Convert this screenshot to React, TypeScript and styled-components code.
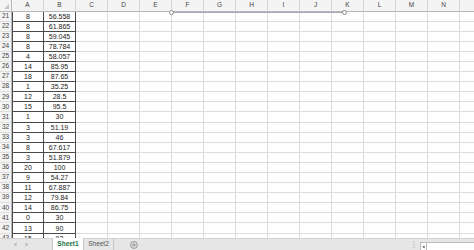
import React from "react";
import styled, { createGlobalStyle } from "styled-components";

const GlobalStyle = createGlobalStyle`
  html, body { margin: 0; padding: 0; background: #ffffff; overflow: hidden; }
  body { font-family: "Liberation Sans", Arial, sans-serif; }
  * { box-sizing: border-box; }
`;

const COLS = ["A", "B", "C", "D", "E", "F", "G", "H", "I", "J", "K", "L", "M", "N", ""];

const DATA: Array<[number, string, string]> = [
  [21, "8", "56.558"],
  [22, "8", "61.865"],
  [23, "8", "59.045"],
  [24, "8", "78.784"],
  [25, "4", "58.057"],
  [26, "14", "85.95"],
  [27, "18", "87.65"],
  [28, "1", "35.25"],
  [29, "12", "28.5"],
  [30, "15", "95.5"],
  [31, "1", "30"],
  [32, "3", "51.19"],
  [33, "3", "46"],
  [34, "8", "67.617"],
  [35, "3", "51.879"],
  [36, "20", "100"],
  [37, "9", "54.27"],
  [38, "11", "67.887"],
  [39, "12", "79.84"],
  [40, "14", "86.75"],
  [41, "0", "30"],
  [42, "13", "90"],
  [43, "15", "92"],
];

const Window = styled.div`
  width: 474px;
  height: 250px;
  display: flex;
  flex-direction: column;
  overflow: hidden;
  background: #ffffff;
`;

const SheetArea = styled.div`
  position: relative;
  flex: 1;
  overflow: hidden;
`;

const Grid = styled.div`
  display: grid;
  grid-template-columns: 12px repeat(15, 32px);
  grid-template-rows: 11.5px repeat(23, 10.1px);
  font-size: 7px;
  color: #222;
`;

const CornerCell = styled.div`
  background: #f4f4f4;
  border-right: 1px solid #b8b8b8;
  border-bottom: 1px solid #b8b8b8;
  display: flex;
  align-items: flex-end;
  justify-content: flex-end;
  padding: 0 2px 2px 0;
`;

const ColHeader = styled.div`
  background: #f4f4f4;
  border-right: 1px solid #d6d6d6;
  border-bottom: 1px solid #b8b8b8;
  color: #444;
  font-size: 6.5px;
  display: flex;
  align-items: center;
  justify-content: center;
  line-height: 1;
`;

const RowHeader = styled.div`
  background: #f4f4f4;
  border-right: 1px solid #b8b8b8;
  border-bottom: 1px solid #dedede;
  color: #444;
  font-size: 6.5px;
  display: flex;
  align-items: center;
  justify-content: center;
  line-height: 1;
`;

const Cell = styled.div<{ $boxed?: boolean; $first?: boolean }>`
  border-right: 1px solid ${(p) => (p.$boxed ? "#4a4a4a" : "#dcdcdc")};
  border-bottom: 1px solid ${(p) => (p.$boxed ? "#4a4a4a" : "#dcdcdc")};
  border-left: ${(p) => (p.$first ? "1px solid #4a4a4a" : "none")};
  display: flex;
  align-items: center;
  justify-content: center;
  line-height: 1;
  white-space: nowrap;
  overflow: hidden;
`;

const SelectionEdge = styled.div`
  position: absolute;
  left: 171px;
  top: 11.5px;
  width: 173px;
  height: 1.5px;
  background: #a2acb8;
`;

const Handle = styled.div<{ $x: number }>`
  position: absolute;
  left: ${(p) => p.$x - 2.5}px;
  top: 10px;
  width: 5px;
  height: 5px;
  border-radius: 50%;
  border: 1px solid #8a8a8a;
  background: #ffffff;
`;

const TabBar = styled.div`
  height: 12px;
  flex: none;
  display: flex;
  align-items: stretch;
  background: #e6e6e6;
  border-top: 1px solid #d2d2d2;
  font-size: 6.5px;
`;

const NavArrows = styled.div`
  width: 52px;
  display: flex;
  align-items: center;
  gap: 8px;
  padding-left: 13px;
`;

const SheetTab = styled.div<{ $active?: boolean }>`
  width: ${(p) => (p.$active ? 32 : 30)}px;
  margin-top: -1px;
  display: flex;
  align-items: center;
  justify-content: center;
  background: ${(p) => (p.$active ? "#ffffff" : "transparent")};
  color: ${(p) => (p.$active ? "#217346" : "#555")};
  font-weight: ${(p) => (p.$active ? 700 : 400)};
  border-right: 1px solid #c6c6c6;
  border-left: ${(p) => (p.$active ? "1px solid #c6c6c6" : "none")};
  line-height: 1;
`;

const AddSheet = styled.div`
  width: 40px;
  display: flex;
  align-items: center;
  justify-content: center;
`;

const Spacer = styled.div`
  flex: 1;
`;

const Dots = styled.div`
  width: 10px;
  display: flex;
  align-items: center;
  justify-content: center;
  margin-right: 1px;
`;

const HScroll = styled.div`
  width: 54px;
  display: flex;
  align-items: stretch;
  padding-top: 3px;
`;

const ScrollBtn = styled.div`
  width: 7px;
  background: #ffffff;
  border: 1px solid #bdbdbd;
  border-bottom: none;
  display: flex;
  align-items: center;
  justify-content: center;
`;

const ScrollTrack = styled.div`
  flex: 1;
  background: #ffffff;
  border-top: 1px solid #bdbdbd;
`;

const Tri = ({ dir, size = 4, color }: { dir: "l" | "r"; size?: number; color: string }) => (
  <svg width={size} height={size + 1} viewBox="0 0 4 5">
    {dir === "l" ? <path d="M3.5 0.5 L0.5 2.5 L3.5 4.5 Z" fill={color} /> : <path d="M0.5 0.5 L3.5 2.5 L0.5 4.5 Z" fill={color} />}
  </svg>
);

export default function App() {
  return (
    <>
      <GlobalStyle />
      <Window>
        <SheetArea>
          <Grid>
            <CornerCell>
              <svg width="5" height="5" viewBox="0 0 5 5">
                <path d="M5 0 L5 5 L0 5 Z" fill="#c4c4c4" />
              </svg>
            </CornerCell>
            {COLS.map((c, i) => (
              <ColHeader key={i}>{c}</ColHeader>
            ))}
            {DATA.map(([row, a, b]) => (
              <React.Fragment key={row}>
                <RowHeader>{row}</RowHeader>
                <Cell $boxed $first>{a}</Cell>
                <Cell $boxed>{b}</Cell>
                {COLS.slice(2).map((_, i) => (
                  <Cell key={i} />
                ))}
              </React.Fragment>
            ))}
          </Grid>
          <SelectionEdge />
          <Handle $x={171.5} />
          <Handle $x={344} />
        </SheetArea>
        <TabBar>
          <NavArrows>
            <Tri dir="l" color="#b8b8b8" />
            <Tri dir="r" color="#b8b8b8" />
          </NavArrows>
          <SheetTab $active>Sheet1</SheetTab>
          <SheetTab>Sheet2</SheetTab>
          <AddSheet>
            <svg width="8" height="8" viewBox="0 0 8 8">
              <circle cx="4" cy="4" r="3.4" fill="none" stroke="#7a7a7a" strokeWidth="0.8" />
              <path d="M4 2.2 V5.8 M2.2 4 H5.8" stroke="#7a7a7a" strokeWidth="0.8" />
            </svg>
          </AddSheet>
          <Spacer />
          <Dots>
            <svg width="2" height="7" viewBox="0 0 2 7">
              <circle cx="1" cy="1" r="0.6" fill="#9a9a9a" />
              <circle cx="1" cy="3.5" r="0.6" fill="#9a9a9a" />
              <circle cx="1" cy="6" r="0.6" fill="#9a9a9a" />
            </svg>
          </Dots>
          <HScroll>
            <ScrollBtn>
              <Tri dir="l" size={3} color="#555" />
            </ScrollBtn>
            <ScrollTrack />
          </HScroll>
        </TabBar>
      </Window>
    </>
  );
}
